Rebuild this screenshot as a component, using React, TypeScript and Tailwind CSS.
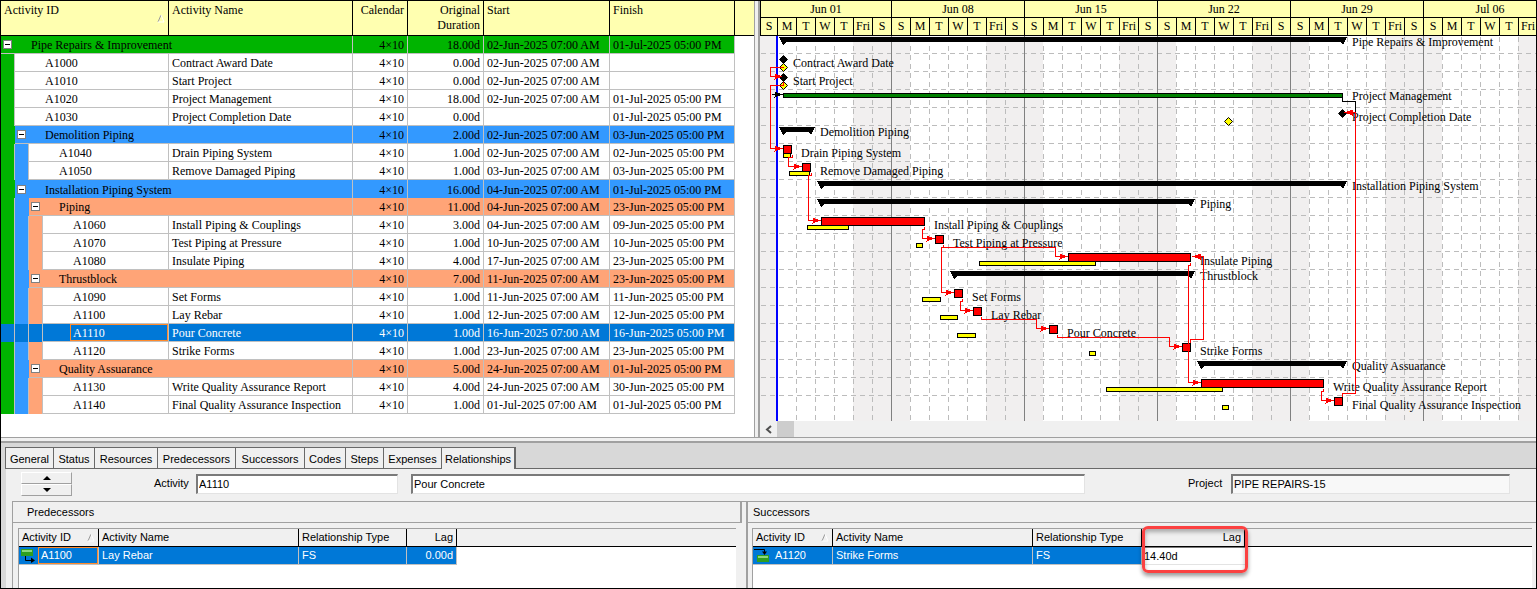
import React from "react";

type Row = {
  level: number;
  group?: boolean;
  id?: string;
  name: string;
  duration: string;
  start: string;
  finish: string;
  selected?: boolean;
};

const rows: Row[] = [
  { level: 0, group: true, name: "Pipe Repairs & Improvement", duration: "18.00d", start: "02-Jun-2025 07:00 AM", finish: "01-Jul-2025 05:00 PM" },
  { level: 1, id: "A1000", name: "Contract Award Date", duration: "0.00d", start: "02-Jun-2025 07:00 AM", finish: "" },
  { level: 1, id: "A1010", name: "Start Project", duration: "0.00d", start: "02-Jun-2025 07:00 AM", finish: "" },
  { level: 1, id: "A1020", name: "Project Management", duration: "18.00d", start: "02-Jun-2025 07:00 AM", finish: "01-Jul-2025 05:00 PM" },
  { level: 1, id: "A1030", name: "Project Completion Date", duration: "0.00d", start: "", finish: "01-Jul-2025 05:00 PM" },
  { level: 1, group: true, name: "Demolition Piping", duration: "2.00d", start: "02-Jun-2025 07:00 AM", finish: "03-Jun-2025 05:00 PM" },
  { level: 2, id: "A1040", name: "Drain Piping System", duration: "1.00d", start: "02-Jun-2025 07:00 AM", finish: "02-Jun-2025 05:00 PM" },
  { level: 2, id: "A1050", name: "Remove Damaged Piping", duration: "1.00d", start: "03-Jun-2025 07:00 AM", finish: "03-Jun-2025 05:00 PM" },
  { level: 1, group: true, name: "Installation Piping System", duration: "16.00d", start: "04-Jun-2025 07:00 AM", finish: "01-Jul-2025 05:00 PM" },
  { level: 2, group: true, name: "Piping", duration: "11.00d", start: "04-Jun-2025 07:00 AM", finish: "23-Jun-2025 05:00 PM" },
  { level: 3, id: "A1060", name: "Install Piping & Couplings", duration: "3.00d", start: "04-Jun-2025 07:00 AM", finish: "09-Jun-2025 05:00 PM" },
  { level: 3, id: "A1070", name: "Test Piping at Pressure", duration: "1.00d", start: "10-Jun-2025 07:00 AM", finish: "10-Jun-2025 05:00 PM" },
  { level: 3, id: "A1080", name: "Insulate Piping", duration: "4.00d", start: "17-Jun-2025 07:00 AM", finish: "23-Jun-2025 05:00 PM" },
  { level: 2, group: true, name: "Thrustblock", duration: "7.00d", start: "11-Jun-2025 07:00 AM", finish: "23-Jun-2025 05:00 PM" },
  { level: 3, id: "A1090", name: "Set Forms", duration: "1.00d", start: "11-Jun-2025 07:00 AM", finish: "11-Jun-2025 05:00 PM" },
  { level: 3, id: "A1100", name: "Lay Rebar", duration: "1.00d", start: "12-Jun-2025 07:00 AM", finish: "12-Jun-2025 05:00 PM" },
  { level: 3, id: "A1110", name: "Pour Concrete", duration: "1.00d", start: "16-Jun-2025 07:00 AM", finish: "16-Jun-2025 05:00 PM", selected: true },
  { level: 3, id: "A1120", name: "Strike Forms", duration: "1.00d", start: "23-Jun-2025 07:00 AM", finish: "23-Jun-2025 05:00 PM" },
  { level: 2, group: true, name: "Quality Assuarance", duration: "5.00d", start: "24-Jun-2025 07:00 AM", finish: "01-Jul-2025 05:00 PM" },
  { level: 3, id: "A1130", name: "Write Quality Assurance Report", duration: "4.00d", start: "24-Jun-2025 07:00 AM", finish: "30-Jun-2025 05:00 PM" },
  { level: 3, id: "A1140", name: "Final Quality Assurance Inspection", duration: "1.00d", start: "01-Jul-2025 07:00 AM", finish: "01-Jul-2025 05:00 PM" },
];

const levelColors = ["bg-[#00b400]", "bg-[#3399ff]", "bg-[#ffa477]"];

const weeks = ["Jun 01", "Jun 08", "Jun 15", "Jun 22", "Jun 29", "Jul 06"];
const days = ["S", "M", "T", "W", "T", "Fri", "S"];

// Bars by row of the activity table: [row, from, to]
const summaries = [
  [0, 779, 1347],
  [5, 779, 815],
  [8, 817, 1347],
  [9, 817, 1195],
  [13, 950, 1195],
  [18, 1197, 1347],
];

const critical = [
  [6, 783, 792],
  [7, 802, 811],
  [10, 821, 925],
  [11, 935, 944],
  [12, 1068, 1191],
  [14, 954, 963],
  [15, 973, 982],
  [16, 1049, 1058],
  [17, 1182, 1191],
  [19, 1201, 1324],
  [20, 1334, 1343],
];

const baselines = [
  [6, 783, 791],
  [7, 789, 810],
  [10, 807, 849],
  [11, 916, 923],
  [12, 979, 1096],
  [14, 922, 941],
  [15, 940, 958],
  [16, 957, 976],
  [17, 1089, 1096],
  [19, 1106, 1223],
  [20, 1222, 1229],
];

// Label x per row, and the baseline inside the row
const labels = [
  [1352, 10], [793, 13], [793, 13], [1352, 10], [1352, 13], [820, 10],
  [801, 13], [820, 13], [1352, 10], [1200, 10], [934, 13], [953, 13],
  [1200, 13], [1200, 10], [972, 13], [991, 13], [1067, 13], [1200, 13],
  [1352, 10], [1333, 13], [1352, 13],
];

const links = [
  "M783 67H770V76H780",
  "M783 81V85H770V148H782",
  "M792 154V157H788V166H801",
  "M811 172V175H808V220H820",
  "M924 226V229H922V238H934",
  "M943 244V247H1055V256H1067",
  "M943 247H941V292H953",
  "M962 298V301H960V310H972",
  "M981 316V319H1036V328H1048",
  "M1057 334V337H1169V346H1181",
  "M1190 262V265H1188V382H1200",
  "M1190 342V339H1203V256H1192",
  "M1323 388V391H1321V400H1333",
  "M1342 396V393H1355V112H1343",
];

// Arrow heads: [tip x, tip y, direction]
const arrows = [
  [782, 76, 1], [782, 148, 1], [801, 166, 1], [820, 220, 1], [934, 238, 1],
  [1067, 256, 1], [953, 292, 1], [972, 310, 1], [1048, 328, 1], [1181, 346, 1],
  [1200, 382, 1], [1192, 256, -1], [1333, 400, 1], [1344, 112, -1],
];

const rowTop = (row: number) => 36 + row * 18;

const arrowPath = (x: number, y: number, dir: number) =>
  `M${x} ${y}L${x - 8 * dir} ${y - 3}V${y + 3}Z`;

const diamondPath = (x: number, y: number) =>
  `M${x - 4} ${y}L${x} ${y - 4}L${x + 4} ${y}L${x} ${y + 4}Z`;

function SortMark() {
  return (
    <svg width="8" height="9" viewBox="0 0 8 9" aria-hidden="true">
      <path d="M1 8L4 1" stroke="#999" fill="none" />
      <path d="M4 1L7 8H1" stroke="#fff" fill="none" />
    </svg>
  );
}

function GroupToggle({ name }: { name: string }) {
  return (
    <button
      type="button"
      aria-label={`Collapse ${name}`}
      className="ml-[2px] mr-[19px] flex h-[9px] w-[9px] shrink-0 items-center justify-center border border-[#808080] bg-white"
    >
      <span className="h-px w-[5px] bg-black"></span>
    </button>
  );
}

function ActivityRow({ row, next }: { row: Row; next?: Row }) {
  const fill = row.selected
    ? "bg-[#0078d7] text-white"
    : row.group
      ? levelColors[row.level]
      : "bg-white";
  const line =
    row.group && next?.group ? "" : "border-b border-b-[#c0c0c0]";
  const box = `border-r border-r-[#c0c0c0] ${line} ${fill}`;
  const cell = `${box} pt-[2px] pb-0`;

  return (
    <tr className="h-[18px]">
      <td colSpan={row.group ? 2 : 1} className="p-0">
        <div className="flex h-[18px]">
          {levelColors.slice(0, row.level).map((color, i) => (
            <div
              key={color}
              className={`w-[14px] shrink-0 ${row.group && i === row.level - 1 ? "" : "border-r border-[#c0c0c0]"} ${row.selected ? "bg-[#0078d7]" : color}`}
            ></div>
          ))}
          <div className={`flex flex-1 items-center ${box}`}>
            {row.group ? (
              <>
                <GroupToggle name={row.name} />
                <span className="pt-[2px]">{row.name}</span>
              </>
            ) : (
              <div
                className={`ml-[27px] flex-1 border pt-[2px] pl-[2px] leading-[13px] ${row.selected ? "border-[#ff8a2b]" : "border-transparent"}`}
              >
                {row.id}
              </div>
            )}
          </div>
        </div>
      </td>
      {!row.group && <td className={`${cell} pr-0 pl-[3px]`}>{row.name}</td>}
      <td className={`${cell} pr-[3px] pl-0 text-right`}>4×10</td>
      <td className={`${cell} pr-[3px] pl-0 text-right`}>{row.duration}</td>
      <td className={`${cell} pr-0 pl-[3px]`}>{row.start}</td>
      <td className={`${cell} pr-0 pl-[3px]`}>{row.finish}</td>
      <td className="p-0"></td>
    </tr>
  );
}

function ActivityTable() {
  const head =
    "border-r border-b border-black bg-[#ffffb0] px-[3px] pt-[2px] align-top font-normal leading-[15px]";

  return (
    <table className="w-full table-fixed border-separate border-spacing-0 text-[12px] leading-[15px] whitespace-nowrap">
      <colgroup>
        <col className="w-[168px]" />
        <col className="w-[184px]" />
        <col className="w-[55px]" />
        <col className="w-[76px]" />
        <col className="w-[126px]" />
        <col className="w-[125px]" />
        <col />
      </colgroup>
      <thead>
        <tr className="h-[35px]">
          <th className={`${head} text-left`}>
            <div className="flex h-[20px] items-end justify-between">
              <span className="self-start">Activity ID</span>
              <SortMark />
            </div>
          </th>
          <th className={`${head} text-left`}>Activity Name</th>
          <th className={`${head} text-right`}>Calendar</th>
          <th className={`${head} text-right`}>
            Original
            <br />
            Duration
          </th>
          <th className={`${head} text-left`}>Start</th>
          <th className={`${head} text-left`}>Finish</th>
          <td className="border-b border-black bg-[#ffffb0] p-0"></td>
        </tr>
      </thead>
      <tbody>
        {rows.map((row, i) => (
          <ActivityRow key={row.name} row={row} next={rows[i + 1]} />
        ))}
      </tbody>
    </table>
  );
}

function Timescale() {
  return (
    <div className="flex h-[35px] overflow-hidden border-l border-black bg-[#ffffb0] text-[12px]">
      {weeks.map((week, w) => (
        <div key={week} className={`shrink-0 ${w === 0 ? "w-[131px]" : "w-[133px]"}`}>
          <div className="h-[17px] border-r border-b border-black text-center leading-[17px]">
            {week}
          </div>
          <div className="flex h-[18px]">
            {/* the scale ends on the Friday of the last week */}
            {days.slice(0, w === weeks.length - 1 ? 6 : 7).map((day, d) => (
              <div
                key={d}
                className={`shrink-0 border-r border-b border-black text-center leading-[17px] ${w === 0 && d === 0 ? "w-[17px]" : "w-[19px]"}`}
              >
                {day}
              </div>
            ))}
          </div>
        </div>
      ))}
      <div className="flex-1 border-b border-black"></div>
    </div>
  );
}

function GanttChart() {
  return (
    <svg className="block h-[385px] w-full bg-white" role="img" aria-label="Gantt chart">
      <g transform="translate(-760 -36)" shapeRendering="crispEdges">
        {weeks.map((week, w) => (
          <rect key={week} x={720 + w * 133} y="36" width="57" height="385" fill="#f1efef" />
        ))}
        <rect x="1518" y="36" width="57" height="385" fill="#f1efef" />
        <g stroke="#bcbcbc" strokeDasharray="5 4" transform="translate(0.5 0.5)">
          {Array.from({ length: 42 }, (_, d) => (
            <path key={d} d={`M${777 + d * 19} 36V421`} />
          ))}
          {rows.slice(1).map((row, i) => (
            <path key={row.name} d={`M760 ${53 + i * 18}H3000`} />
          ))}
        </g>
        {weeks.map((week, w) => (
          <rect key={week} x={891 + w * 133} y="36" width="1" height="385" fill="#808080" />
        ))}
        <rect x="776" y="36" width="2" height="385" fill="#00f" />

        {summaries.map(([row, from, to]) => {
          const y = rowTop(row) + 1;
          return (
            <path
              key={row}
              d={`M${from} ${y}H${to}L${to - 4} ${y + 8}L${to - 7} ${y + 5}H${from + 7}L${from + 4} ${y + 8}Z`}
            />
          );
        })}

        <g stroke="#000" transform="translate(0.5 0.5)">
          <rect x="783" y="93" width="559" height="4" fill="#008000" />
          {baselines.map(([row, from, to]) => (
            <rect key={row} x={from} y={rowTop(row) + 9} width={to - from - 1} height="4" fill="#ff0" />
          ))}
          {critical.map(([row, from, to]) => (
            <rect key={row} x={from} y={rowTop(row) + 1} width={to - from - 1} height="8" fill="#f00" />
          ))}
          <g shapeRendering="auto">
            <path d={diamondPath(783, 59)} />
            <path d={diamondPath(783, 67)} fill="#ff0" />
            <path d={diamondPath(783, 77)} />
            <path d={diamondPath(783, 85)} fill="#ff0" />
            <path d={diamondPath(1342, 113)} />
            <path d={diamondPath(1228, 121)} fill="#ff0" />
          </g>
        </g>

        <g className="text-[12px]">
          {rows.map((row, i) => (
            <text key={row.name} x={labels[i][0]} y={rowTop(i) + labels[i][1]}>
              {row.name}
            </text>
          ))}
        </g>

        <g transform="translate(0.5 0.5)">
          {links.map((d) => (
            <path key={d} d={d} stroke="#f00" fill="none" />
          ))}
          {arrows.map(([x, y, dir]) => (
            <path key={`${x}-${y}`} d={arrowPath(x, y, dir)} fill="#f00" />
          ))}
          <path d="M1342 97V101H1355V111M771 94H783" stroke="#000" fill="none" />
          <path d={arrowPath(782, 94, 1)} />
        </g>
      </g>
    </svg>
  );
}

function ChartScrollbar() {
  return (
    <div className="flex h-4 bg-[#f0f0f0]">
      <button type="button" aria-label="Scroll left" className="flex w-[17px] items-center justify-center">
        <svg width="7" height="9" viewBox="0 0 7 9" aria-hidden="true">
          <path d="M6 1L2 4.5L6 8" stroke="#505050" strokeWidth="2" fill="none" />
        </svg>
      </button>
      <div className="w-[17px] bg-[#cdcdcd]"></div>
    </div>
  );
}

const tabs = [
  { label: "General", width: "w-[48px]" },
  { label: "Status", width: "w-[41px]" },
  { label: "Resources", width: "w-[63px]" },
  { label: "Predecessors", width: "w-[78px]" },
  { label: "Successors", width: "w-[69px]" },
  { label: "Codes", width: "w-[41px]" },
  { label: "Steps", width: "w-[38px]" },
  { label: "Expenses", width: "w-[58px]" },
];

function Tabs() {
  return (
    <div className="flex h-[26px] bg-[#d8d8d8] pt-1" role="tablist">
      <div className="w-1 shrink-0"></div>
      <div className="flex border-l border-[#696969]">
        {tabs.map((tab) => (
          <button
            key={tab.label}
            type="button"
            role="tab"
            aria-selected="false"
            className={`${tab.width} border-t border-r border-b border-[#696969] bg-[#f0f0f0] pt-[2px] text-center`}
          >
            {tab.label}
          </button>
        ))}
        <button
          type="button"
          role="tab"
          aria-selected="true"
          className="w-[74px] border-t border-r-2 border-[#696969] bg-[#f0f0f0] pt-px text-center"
        >
          Relationships
        </button>
      </div>
      <div className="flex-1 border-b border-[#696969]"></div>
    </div>
  );
}

function DetailsForm() {
  const field =
    "h-[20px] border-t-2 border-l-2 border-r border-b border-t-[#7a7a7a] border-l-[#7a7a7a] border-r-[#e3e3e3] border-b-[#e3e3e3] px-px pb-[2px]";
  const spin =
    "flex h-[12px] items-center justify-center border border-t-white border-l-white border-r-[#a0a0a0] border-b-[#a0a0a0]";

  return (
    <form className="flex h-[32px] items-start pt-[3px] pl-[15px]">
      <div className="flex w-[51px] flex-col">
        <button type="button" aria-label="Previous activity" className={spin}>
          <svg width="8" height="4" viewBox="0 0 8 4" aria-hidden="true">
            <path d="M0 4L4 0L8 4Z" />
          </svg>
        </button>
        <button type="button" aria-label="Next activity" className={spin}>
          <svg width="8" height="4" viewBox="0 0 8 4" aria-hidden="true">
            <path d="M0 0L4 4L8 0Z" />
          </svg>
        </button>
      </div>
      <div className="flex min-w-0 flex-1 pt-[2px]">
        <label htmlFor="activity-id" className="ml-[82px] w-[42px] leading-[19px]">
          Activity
        </label>
        <input id="activity-id" defaultValue="A1110" className={`${field} w-[202px] bg-white`} />
        <input aria-label="Activity name" defaultValue="Pour Concrete" className={`${field} ml-[13px] min-w-0 flex-1 bg-white`} />
        <label htmlFor="project" className="ml-[103px] w-[43px] leading-[19px]">
          Project
        </label>
        <input id="project" readOnly value="PIPE REPAIRS-15" className={`${field} mr-[26px] w-[279px] bg-[#f8f8f8]`} />
      </div>
    </form>
  );
}

function PredecessorIcon() {
  return (
    <svg width="16" height="16" viewBox="0 0 16 16" aria-hidden="true">
      <rect x="1" y="2" width="12" height="7" fill="#2f9e1f" />
      <rect x="2" y="3" width="10" height="2" fill="#8ad67c" />
      <path d="M5.5 9V13.5H12" stroke="#000" fill="none" />
      <path d="M11 10.5L15 13.5L11 16Z" />
    </svg>
  );
}

function SuccessorIcon() {
  return (
    <svg width="16" height="16" viewBox="0 0 16 16" aria-hidden="true">
      <path d="M0 2.5H10.5V5" stroke="#000" fill="none" />
      <path d="M8 4.5H13L10.5 8Z" />
      <rect x="3" y="8" width="12" height="7" fill="#2f9e1f" />
      <rect x="4" y="9" width="10" height="2" fill="#8ad67c" />
    </svg>
  );
}

type LinkTableProps = {
  icon: React.ReactNode;
  id: string;
  name: string;
  focused?: boolean;
  typeWidth: string;
  lagWidth: string;
  lag: React.ReactNode;
  highlight?: boolean;
};

function LinkTable({ icon, id, name, focused, typeWidth, lagWidth, lag, highlight }: LinkTableProps) {
  const head = "border-r border-b border-black bg-[#f0f0f0] px-[3px] py-0 font-normal";
  const cell = "border-r border-b border-[#c0c0c0] bg-[#0078d7] px-[3px] py-0 text-white";

  return (
    <div className="flex-1 border-t border-l border-[#a0a0a0] bg-white">
      <table className="w-full table-fixed border-separate border-spacing-0 leading-[17px]">
        <colgroup>
          <col className="w-[80px]" />
          <col className="w-[200px]" />
          <col className={typeWidth} />
          <col className={lagWidth} />
          <col />
        </colgroup>
        <thead>
          <tr className="h-[18px]">
            <th className={`${head} text-left`}>
              <div className="flex items-center justify-between">
                Activity ID
                <SortMark />
              </div>
            </th>
            <th className={`${head} text-left`}>Activity Name</th>
            <th className={`${head} text-left`}>Relationship Type</th>
            <th className={`${head} relative text-right`}>
              Lag
              {highlight && (
                <div className="absolute -top-[3px] -right-1 left-0 h-[47px] rounded-md border-3 border-[#fb4141] shadow-[0_3px_4px_rgba(0,0,0,0.4),inset_0_3px_4px_rgba(0,0,0,0.3)]"></div>
              )}
            </th>
            <td className="border-b border-black bg-[#f0f0f0] p-0"></td>
          </tr>
        </thead>
        <tbody>
          <tr className="h-[18px]">
            <td className="border-r border-b border-[#c0c0c0] bg-[#0078d7] p-0 text-white">
              <div className="flex h-[17px]">
                <div className="w-[19px] shrink-0 pl-px">{icon}</div>
                <div className={`flex-1 border pl-[2px] leading-[15px] ${focused ? "border-[#ff8a2b]" : "border-transparent"}`}>
                  {id}
                </div>
              </div>
            </td>
            <td className={cell}>{name}</td>
            <td className={cell}>FS</td>
            {lag}
            <td className="p-0"></td>
          </tr>
        </tbody>
      </table>
    </div>
  );
}

function Relationships() {
  return (
    <div className="grid flex-1 grid-cols-[734fr_790fr] pl-[6px]">
      <section className="flex flex-col border-t border-l border-[#a0a0a0]">
        <div className="mr-1 flex h-[21px] items-center border-r-2 border-b border-[#a0a0a0] pl-[14px]">
          Predecessors
        </div>
        <div className="flex flex-1 pt-[5px] pr-[10px] pl-[5px]">
          <LinkTable
            icon={<PredecessorIcon />}
            id="A1100"
            name="Lay Rebar"
            focused
            typeWidth="w-[108px]"
            lagWidth="w-[50px]"
            lag={
              <td className="border-r border-b border-[#c0c0c0] bg-[#0078d7] px-[3px] py-0 text-right text-white">
                0.00d
              </td>
            }
          />
        </div>
      </section>
      <section className="flex flex-col border-t border-l-2 border-[#a0a0a0]">
        <div className="flex h-[21px] items-center border-b border-[#a0a0a0] pl-[5px]">
          Successors
        </div>
        <div className="flex flex-1 pt-[5px] pr-1 pl-1">
          <LinkTable
            icon={<SuccessorIcon />}
            id="A1120"
            name="Strike Forms"
            typeWidth="w-[109px]"
            lagWidth="w-[103px]"
            highlight
            lag={
              <td className="p-0">
                <input
                  aria-label="Lag"
                  defaultValue="14.40d"
                  className="block h-[18px] w-full border-t border-b border-t-[#7a7a7a] border-b-[#e3e3e3] bg-white pl-[2px]"
                />
              </td>
            }
          />
        </div>
      </section>
    </div>
  );
}

function App() {
  return (
    <main className="flex min-h-screen flex-col border border-black bg-[#f0f0f0] font-['Liberation_Sans',Arial,sans-serif] text-[11px] text-black">
      <div className="flex border-b border-[#a0a0a0] font-['Liberation_Serif','Times_New_Roman',serif]">
        <div className="w-[754px] shrink-0 border-r border-[#a0a0a0] bg-white">
          <ActivityTable />
        </div>
        <div className="w-[5px] shrink-0 border-r-2 border-[#a0a0a0]"></div>
        <div className="min-w-0 flex-1">
          <Timescale />
          <GanttChart />
          <ChartScrollbar />
        </div>
      </div>
      <div className="h-[5px] border-b-2 border-[#a0a0a0]"></div>
      <Tabs />
      <div className="flex flex-1 border-l-5 border-[#d8d8d8]">
        <div className="flex min-w-0 flex-1 flex-col">
          <DetailsForm />
          <Relationships />
        </div>
      </div>
    </main>
  );
}

export default App;
